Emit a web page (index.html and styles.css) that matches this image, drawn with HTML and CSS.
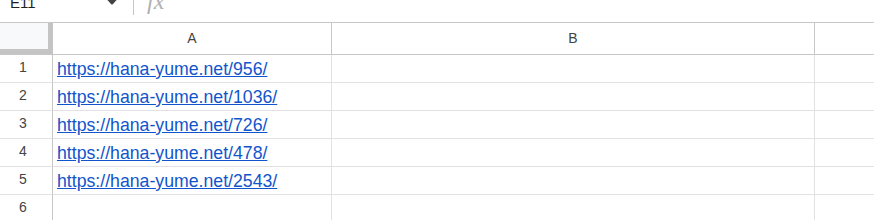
FILE: index.html
```html
<!DOCTYPE html>
<html lang="ja">
<head>
    <meta charset="UTF-8">
    <title>Sheet</title>
    <link rel="stylesheet" href="styles.css">
</head>
<body>
    <!-- Name box / formula bar, cut off at the top -->
    <div class="toolbar">
        <div class="namebox">E11</div>
        <svg class="drop" width="12" height="7" viewBox="0 0 12 7">
            <path d="M0.5 0 L11.5 0 L6.8 5.2 Q6 6 5.2 5.2 Z" fill="#444"/>
        </svg>
        <div class="sep"></div>
        <div class="fx">fx</div>
    </div>

    <div class="sheet">
        <div class="corner"></div>
        <div class="colhead">A</div>
        <div class="colhead">B</div>
        <div class="colhead last"></div>

        <div class="rowhead">1</div>
        <div class="cell"><a href="#">https://hana-yume.net/956/</a></div>
        <div class="cell"></div>
        <div class="cell last"></div>

        <div class="rowhead">2</div>
        <div class="cell"><a href="#">https://hana-yume.net/1036/</a></div>
        <div class="cell"></div>
        <div class="cell last"></div>

        <div class="rowhead">3</div>
        <div class="cell"><a href="#">https://hana-yume.net/726/</a></div>
        <div class="cell"></div>
        <div class="cell last"></div>

        <div class="rowhead">4</div>
        <div class="cell"><a href="#">https://hana-yume.net/478/</a></div>
        <div class="cell"></div>
        <div class="cell last"></div>

        <div class="rowhead">5</div>
        <div class="cell"><a href="#">https://hana-yume.net/2543/</a></div>
        <div class="cell"></div>
        <div class="cell last"></div>

        <div class="rowhead">6</div>
        <div class="cell"></div>
        <div class="cell"></div>
        <div class="cell last"></div>
    </div>
</body>
</html>
```

FILE: styles.css
```css
/* General styling */
body {
    margin: 0;
    background-color: #fff;
    font-family: "Liberation Sans", Arial, sans-serif;
    color: #444;
    overflow: hidden;
}

/* Top bar (name box + fx) */
.toolbar {
    height: 22px;
    border-bottom: 1px solid #c7c7c7;
    display: flex;
    align-items: flex-start;
    overflow: hidden;
}

.namebox {
    margin-left: 10px;
    margin-top: -6px;
    font-size: 15px;
    line-height: 17px;
    color: #1f1f1f;
    width: 96px;
}

.drop {
    margin-top: -1px;
}

.sep {
    width: 1px;
    height: 15px;
    background-color: #c7c7c7;
    margin-left: 15px;
}

.fx {
    margin-left: 13px;
    margin-top: -9px;
    font-family: "Liberation Serif", serif;
    font-style: italic;
    font-size: 24px;
    line-height: 21px;
    color: #b0b0b0;
}

/* Grid */
.sheet {
    display: grid;
    grid-template-columns: 53px 279px 483px 1fr;
    grid-template-rows: 32px repeat(6, 28px);
}

.sheet > div {
    box-sizing: border-box;
}

.corner {
    background-color: #f8f9fa;
    border-right: 5px solid #c4c4c4;
    border-bottom: 1px solid #c7c7c7;
    box-shadow: inset 0 -5px 0 #c4c4c4;
}

.colhead {
    border-right: 1px solid #c7c7c7;
    border-bottom: 1px solid #c7c7c7;
    font-size: 14px;
    line-height: 31px;
    text-align: center;
    color: #444;
}

.rowhead {
    border-right: 1px solid #c7c7c7;
    border-bottom: 1px solid #e1e1e1;
    font-size: 14px;
    line-height: 16px;
    padding-top: 4px;
    padding-right: 6px;
    text-align: center;
    color: #444;
}

.cell {
    border-right: 1px solid #e1e1e1;
    border-bottom: 1px solid #e1e1e1;
    padding: 4px 0 0 4px;
    font-size: 17.7px;
    line-height: 20px;
    white-space: nowrap;
}

.last {
    border-right: none;
}

a {
    color: #1155cc;
    text-decoration: underline;
}
```
